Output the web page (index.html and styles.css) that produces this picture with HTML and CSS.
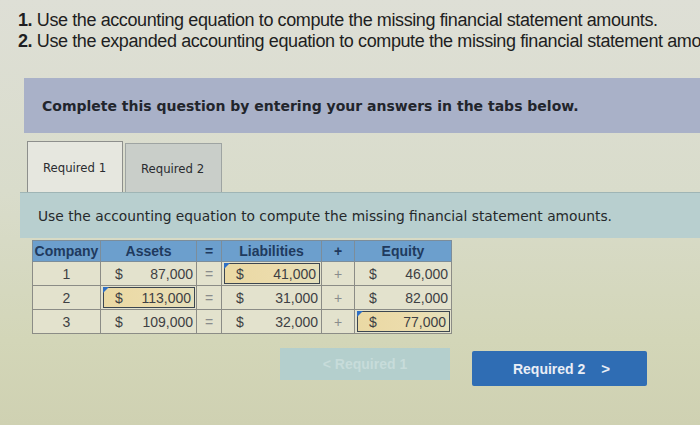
FILE: index.html
```html
<!DOCTYPE html>
<html>
<head>
<meta charset="utf-8">
<link rel="stylesheet" href="styles.css">
</head>
<body>
<div class="page">
  <div class="questions">
    <div class="qline"><b>1.</b> Use the accounting equation to compute the missing financial statement amounts.</div>
    <div class="qline"><b>2.</b> Use the expanded accounting equation to compute the missing financial statement amounts.</div>
  </div>

  <div class="banner">Complete this question by entering your answers in the tabs below.</div>

  <div class="tabs">
    <div class="tab tab-active">Required 1</div>
    <div class="tab tab-other">Required 2</div>
  </div>

  <div class="panel">Use the accounting equation to compute the missing financial statement amounts.</div>

  <table class="eq">
    <thead>
      <tr>
        <th class="c-co">Company</th>
        <th class="c-money">Assets</th>
        <th class="c-op">=</th>
        <th class="c-money c-liab">Liabilities</th>
        <th class="c-op c-plus">+</th>
        <th class="c-money c-eq">Equity</th>
      </tr>
    </thead>
    <tbody>
      <tr>
        <td class="co">1</td>
        <td><div class="money"><span>$</span><span>87,000</span></div></td>
        <td class="op">=</td>
        <td><div class="money input"><span>$</span><span>41,000</span></div></td>
        <td class="op">+</td>
        <td><div class="money"><span>$</span><span>46,000</span></div></td>
      </tr>
      <tr>
        <td class="co">2</td>
        <td><div class="money input"><span>$</span><span>113,000</span></div></td>
        <td class="op">=</td>
        <td><div class="money"><span>$</span><span>31,000</span></div></td>
        <td class="op">+</td>
        <td><div class="money"><span>$</span><span>82,000</span></div></td>
      </tr>
      <tr>
        <td class="co">3</td>
        <td><div class="money"><span>$</span><span>109,000</span></div></td>
        <td class="op">=</td>
        <td><div class="money"><span>$</span><span>32,000</span></div></td>
        <td class="op">+</td>
        <td><div class="money input"><span>$</span><span>77,000</span></div></td>
      </tr>
    </tbody>
  </table>

  <div class="nav">
    <div class="btn btn-disabled">&lt; Required 1</div>
    <div class="btn btn-next">Required 2 <span class="chev">&gt;</span></div>
  </div>
</div>
</body>
</html>
```
FILE: styles.css
```css
html, body {
  margin: 0;
  padding: 0;
}
body {
  width: 700px;
  height: 425px;
  overflow: hidden;
  background: linear-gradient(180deg, #dedfd6 0%, #d9dccb 45%, #d3d6b8 80%, #cfd1b2 100%);
}
.page {
  width: 700px;
  height: 425px;
  overflow: hidden;
}
.questions {
  padding: 10px 0 0 18px;
  font-family: "Liberation Sans", Arial, sans-serif;
  font-size: 18px;
  letter-spacing: -0.4px;
  color: #1e1e22;
}
.qline {
  white-space: nowrap;
  line-height: 21px;
}
.qline b {
  font-weight: bold;
}
.banner {
  margin: 26px 0 0 24px;
  height: 55px;
  background: #a9b1c8;
  display: flex;
  align-items: center;
  padding-left: 18px;
  font-family: "DejaVu Sans", Verdana, sans-serif;
  font-weight: bold;
  font-size: 14px;
  color: #22252c;
}
.tabs {
  margin: 8px 0 0 27px;
  display: flex;
  align-items: flex-end;
  gap: 2px;
}
.tab {
  box-sizing: border-box;
  font-family: "DejaVu Sans Condensed", "DejaVu Sans", sans-serif;
  font-size: 13px;
  color: #2a2c30;
  display: flex;
  align-items: center;
  padding-left: 15px;
}
.tab-active {
  width: 96px;
  height: 51px;
  background: #e6e7df;
  border: 1px solid #8d8f8c;
  border-bottom: none;
}
.tab-other {
  width: 97px;
  height: 49px;
  background: #c9cec9;
  border: 1px solid #9ea4a2;
  border-bottom: none;
}
.panel {
  margin-left: 20px;
  height: 45px;
  background: #b8cfcf;
  border-top: 1px solid #9fb5b5;
  display: flex;
  align-items: center;
  padding-left: 18px;
  font-family: "DejaVu Sans", Verdana, sans-serif;
  font-size: 13.8px;
  color: #25292b;
}
.eq {
  margin: 2px 0 0 32px;
  border-collapse: collapse;
  font-family: "Liberation Sans", Arial, sans-serif;
  font-size: 14px;
  table-layout: fixed;
}
.eq th {
  background: #6c9fcd;
  color: #203a5e;
  font-weight: bold;
  height: 20px;
  padding: 0;
  border: 1px solid #7c8d9a;
  text-align: center;
}
.eq .c-co { width: 67px; }
.eq .c-money { width: 95px; }
.eq .c-liab { width: 99px; }
.eq .c-eq { width: 96px; }
.eq .c-op { width: 24px; }
.eq .c-plus { width: 32px; }
.eq td {
  background: #e3e2cd;
  border: 1px solid #8b8c86;
  height: 23px;
  padding: 0;
  color: #3e4044;
  text-align: center;
}
.eq td.op {
  color: #8a8c8c;
}
.money {
  position: relative;
  display: flex;
  justify-content: space-between;
  align-items: center;
  height: 23px;
  box-sizing: border-box;
  padding: 0 3px 0 14px;
}
.money.input {
  margin: 1px 1px 1px 2px;
  height: 21px;
  border: 1px solid #3c4650;
  background: linear-gradient(90deg, #ead9a4 0%, #ecdcac 55%, #e4e0bc 100%);
  padding-left: 11px;
}
.money.input::before {
  content: "";
  position: absolute;
  left: -1px;
  top: -1px;
  width: 0;
  height: 0;
  border-top: 6px solid #2e6fc4;
  border-right: 6px solid transparent;
}
.nav {
  margin: 14px 0 0 280px;
  display: flex;
  align-items: flex-start;
  gap: 22px;
}
.btn {
  box-sizing: border-box;
  display: flex;
  align-items: center;
  justify-content: center;
  font-family: "Liberation Sans", Arial, sans-serif;
  font-size: 14px;
  font-weight: bold;
}
.btn-disabled {
  width: 170px;
  height: 32px;
  background: #b4cfcd;
  color: #c7dcda;
}
.btn-next {
  margin-top: 3px;
  width: 175px;
  height: 35px;
  background: #2f6db4;
  color: #e9eef6;
  border-radius: 2px;
  gap: 16px;
  padding-left: 4px;
}
.chev {
  font-weight: bold;
  font-size: 15px;
}
```
